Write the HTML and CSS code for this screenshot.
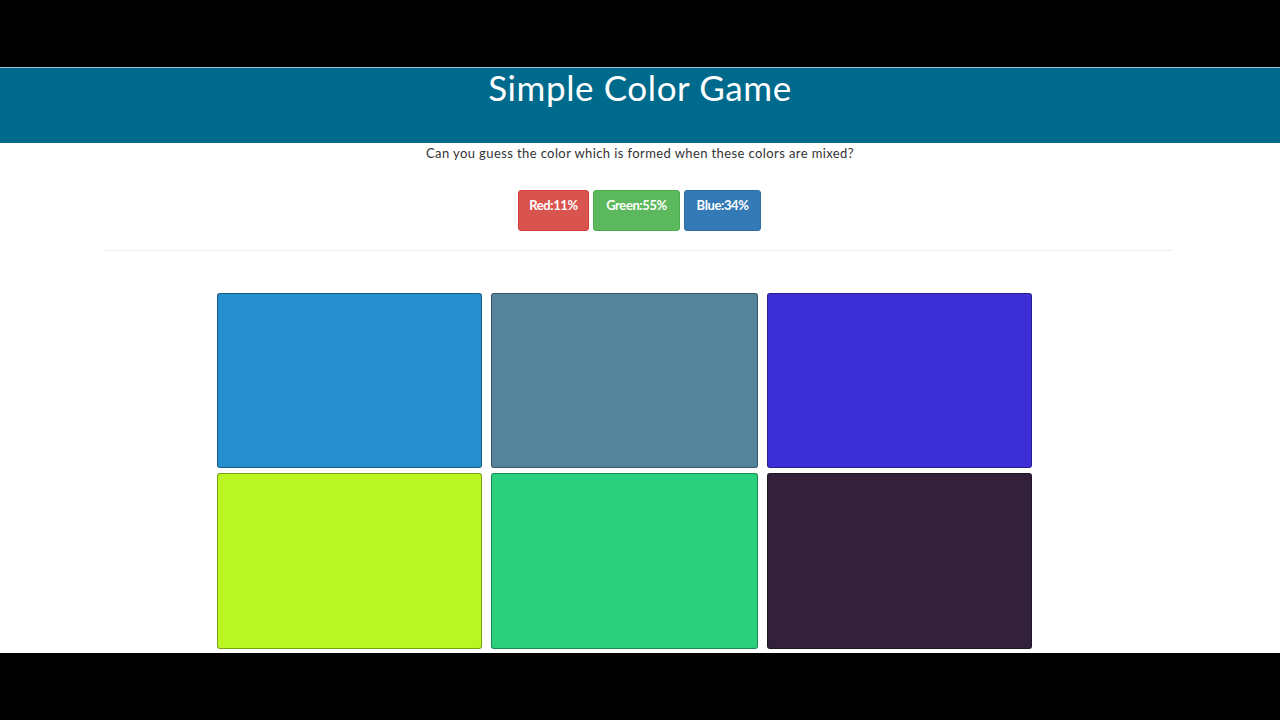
FILE: index.html
```html
<!DOCTYPE html>
<html lang="en">
<head>
    <meta charset="UTF-8">
    <meta name="viewport" content="width=device-width, initial-scale=1.0">
    <title>Simple Color Game</title>
    <link rel="stylesheet" href="styles.css">
</head>
<body>
    <div class="bar"></div>
    <div class="screen">
        <div class="header">
            <h1>Simple Color Game</h1>
        </div>
        <p class="question">Can you guess the color which is formed when these colors are mixed?</p>
        <div class="mix">
            <button class="btn btn-red">Red:11%</button>
            <button class="btn btn-green">Green:55%</button>
            <button class="btn btn-blue">Blue:34%</button>
        </div>
        <hr>
        <div class="squares">
            <div class="square sq1"></div>
            <div class="square sq2"></div>
            <div class="square sq3"></div>
            <div class="square sq4"></div>
            <div class="square sq5"></div>
            <div class="square sq6"></div>
        </div>
    </div>
    <div class="bar"></div>
</body>
</html>
```

FILE: styles.css
```css
body {
    margin: 0;
    background: #000;
    font-family: 'Lato', 'Open Sans', sans-serif;
}
.bar {
    height: 67px;
    background: #000;
}
.screen {
    height: 586px;
    background: #fff;
    overflow: hidden;
}
.header {
    height: 76px;
    background: #006a8c;
    border-top: 1px solid #9fc4d2;
    box-sizing: border-box;
}
h1 {
    margin: 0;
    color: #fff;
    font-weight: 400;
    font-size: 35px;
    line-height: 38px;
    letter-spacing: 0.6px;
    text-align: center;
}
.question {
    margin: 0;
    text-align: center;
    font-size: 13px;
    line-height: 20px;
    letter-spacing: 0.4px;
    color: #333;
}
.mix {
    display: flex;
    justify-content: center;
    gap: 4px;
    margin-top: 27px;
    padding-right: 1px;
}
.btn {
    height: 41px;
    padding: 5px 0 16px;
    box-sizing: border-box;
    border: 1px solid transparent;
    border-radius: 3px;
    color: #fff;
    font-family: 'Lato', sans-serif;
    font-weight: 700;
    font-size: 13px;
    line-height: 17px;
    letter-spacing: -0.4px;
    vertical-align: top;
}
.btn-red {
    width: 71px;
    background: #d9534f;
    border-color: #d43f3a;
}
.btn-green {
    width: 87px;
    background: #5cb85c;
    border-color: #4cae4c;
}
.btn-blue {
    width: 77px;
    background: #337ab7;
    border-color: #2e6da4;
}
hr {
    margin: 19px 107px 0 105px;
    border: 0;
    border-top: 1px solid #eee;
}
.squares {
    display: grid;
    grid-template-columns: 265px 267px 265px;
    grid-template-rows: 175px 176px;
    column-gap: 9px;
    row-gap: 5px;
    margin: 42px 0 0 217px;
}
.square {
    border: 1px solid rgba(0, 0, 0, 0.35);
    border-radius: 3px;
}
.sq1 { background: #248ecf; }
.sq2 { background: #55839b; }
.sq3 { background: #3d2fd6; }
.sq4 { background: #baf722; }
.sq5 { background: #2bd07e; }
.sq6 { background: #33203a; }
```
